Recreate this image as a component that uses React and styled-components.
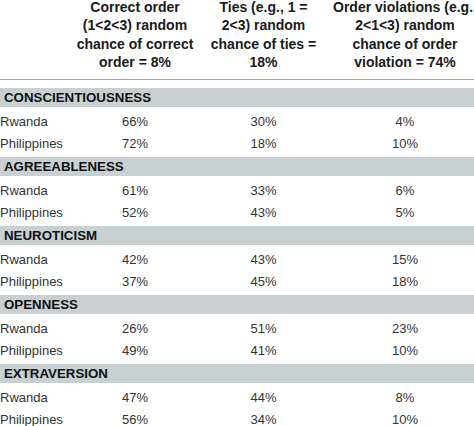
import React from 'react'
import styled, { createGlobalStyle } from 'styled-components'

const GlobalStyle = createGlobalStyle`
    html, body {
        margin: 0;
        padding: 0;
        background: #fff;
    }
    body {
        font-family: "Liberation Sans", Arial, Helvetica, sans-serif;
        overflow: hidden;
    }
`

// last column runs a little past the right edge, like the cropped original
const columns = '75px 120px 137px 146px'

const groups = [
    { name: 'CONSCIENTIOUSNESS', rows: [['Rwanda', '66%', '30%', '4%'], ['Philippines', '72%', '18%', '10%']] },
    { name: 'AGREEABLENESS', rows: [['Rwanda', '61%', '33%', '6%'], ['Philippines', '52%', '43%', '5%']] },
    { name: 'NEUROTICISM', rows: [['Rwanda', '42%', '43%', '15%'], ['Philippines', '37%', '45%', '18%']] },
    { name: 'OPENNESS', rows: [['Rwanda', '26%', '51%', '23%'], ['Philippines', '49%', '41%', '10%']] },
    { name: 'EXTRAVERSION', rows: [['Rwanda', '47%', '44%', '8%'], ['Philippines', '56%', '34%', '10%']] },
]

const headings = [
    ['Correct order', '(1<2<3) random', 'chance of correct', 'order = 8%'],
    ['Ties (e.g., 1 =', '2<3) random', 'chance of ties =', '18%'],
    ['Order violations (e.g.,', '2<1<3) random', 'chance of order', 'violation = 74%'],
]

export default function App() {
    return (
        <>
            <GlobalStyle />
            <Table>
                <HeadRow>
                    <span></span>
                    {headings.map((lines, i) => (
                        <HeadCell key={i}>
                            {lines.map((line, j) => <div key={j}>{line}</div>)}
                        </HeadCell>
                    ))}
                </HeadRow>
                <Body>
                    {groups.map(group => (
                        <Group key={group.name}>
                            <Band>{group.name}</Band>
                            {group.rows.map(row => (
                                <Row key={row[0]}>
                                    <Label>{row[0]}</Label>
                                    {row.slice(1).map((value, i) => <Value key={i}>{value}</Value>)}
                                </Row>
                            ))}
                        </Group>
                    ))}
                </Body>
            </Table>
        </>
    )
}

const Table = styled.div`
    width: 478px;
    margin-top: -2px;
`
const HeadRow = styled.div`
    display: grid;
    grid-template-columns: ${columns};
    padding-bottom: 7.5px;
    border-bottom: 1.5px solid #a3a3a3;
`
const HeadCell = styled.div`
    text-align: center;
    font-weight: 700;
    font-size: 14px;
    line-height: 18.3px;
    color: #1a1a1a;
    white-space: nowrap;
`
const Body = styled.div`
    padding-top: 8px;
`
const Group = styled.section`
    display: flex;
    flex-direction: column;
    padding-bottom: 3px;
`
const Band = styled.div`
    height: 19px;
    line-height: 20px;
    margin-bottom: 3px;
    background: #c8d0d2;
    padding-left: 4px;
    font-weight: 700;
    font-size: 13.3px;
    color: #111;
`
const Row = styled.div`
    display: grid;
    grid-template-columns: ${columns};
    height: 22px;
    align-items: center;
    font-size: 13px;
    color: #333;
`
const Label = styled.div`
    padding-top: 1px;
    white-space: nowrap;
`
const Value = styled.div`
    padding-top: 1px;
    text-align: center;
`
